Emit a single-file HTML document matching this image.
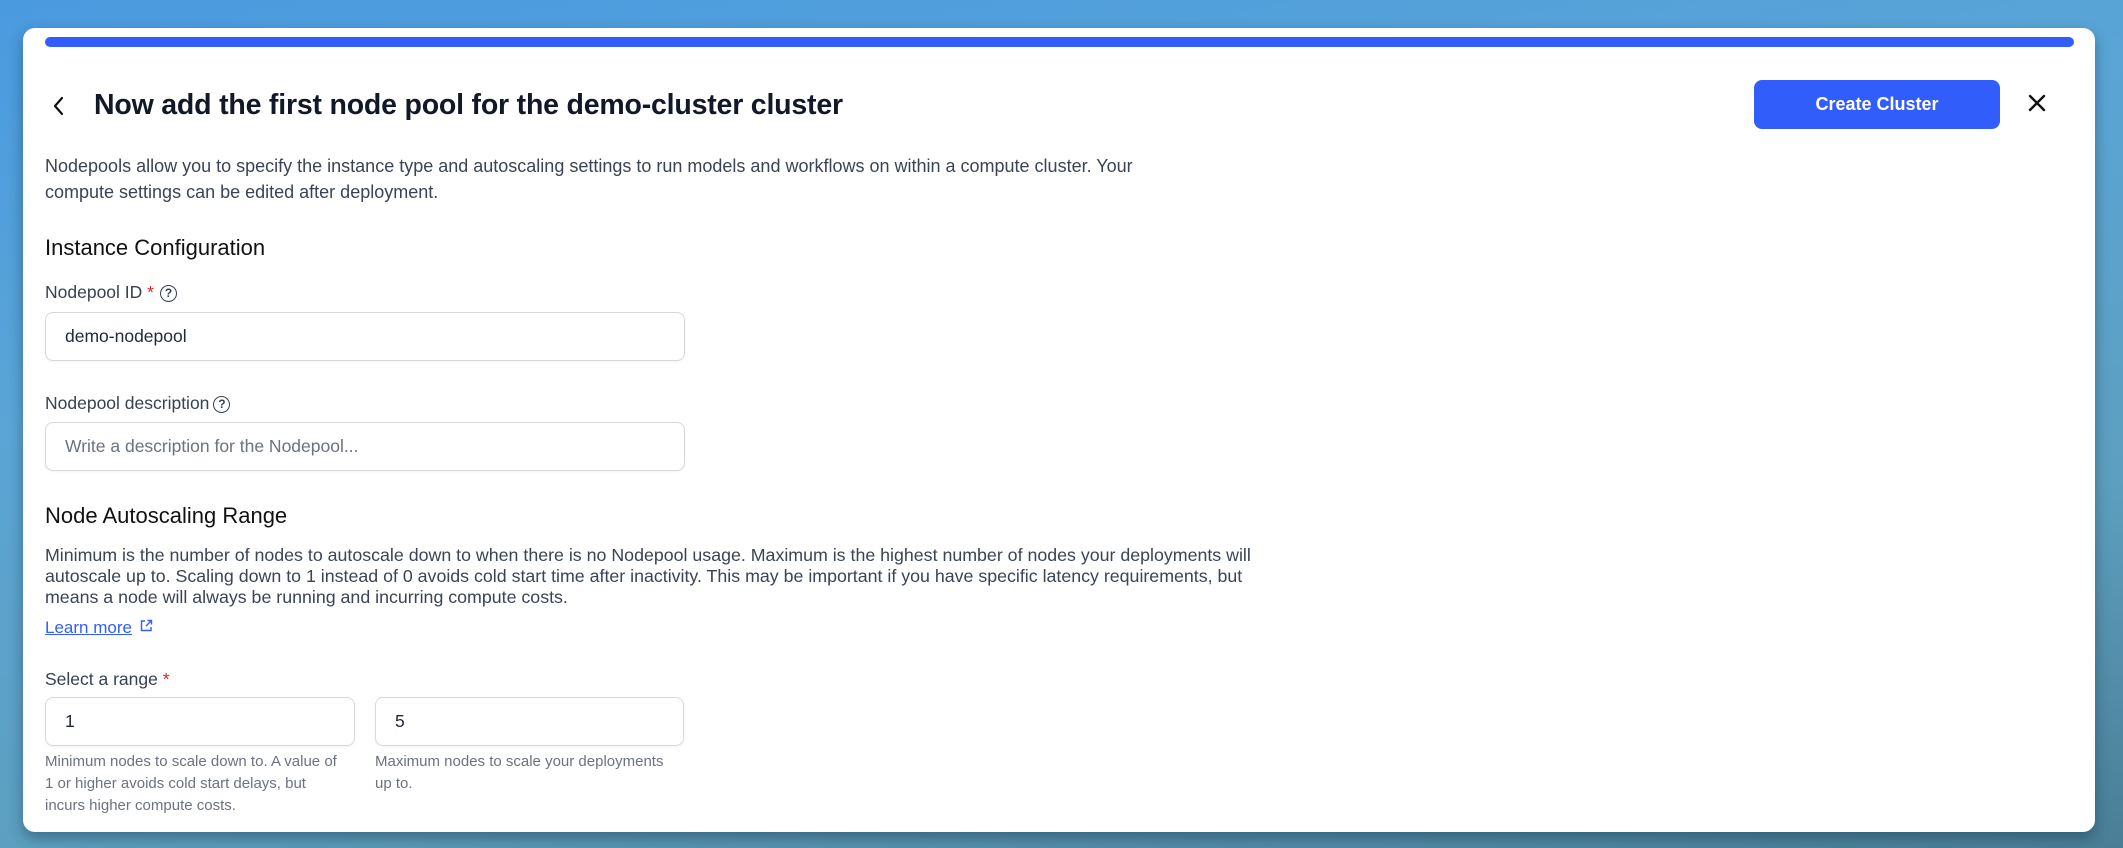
<!DOCTYPE html>
<html><head><meta charset="utf-8"><style>
*{box-sizing:border-box;margin:0;padding:0}
html,body{width:2123px;height:848px;overflow:hidden}
body{background:linear-gradient(170deg,#4a9ae0 0%,#5aa5d6 35%,#5d9fbf 70%,#4a7e96 100%);font-family:"Liberation Sans",sans-serif;position:relative}
.card{position:absolute;left:23px;top:28px;width:2072px;height:804px;background:#fff;border-radius:12px;box-shadow:0 6px 14px rgba(20,50,70,.45)}
.abs{position:absolute}
.bar{left:22px;top:9px;width:2029px;height:10px;background:#315efb;border-radius:5px}
h1{position:absolute;left:71px;top:60px;font-size:28.5px;font-weight:bold;color:#111827;line-height:34px;letter-spacing:-0.2px}
.btn{left:1731px;top:52px;width:246px;height:49px;background:#315efb;border-radius:8px;color:#fff;font-size:18px;font-weight:bold;text-align:center;line-height:49px}
.p{color:#3b4454;font-size:18px;line-height:26px;left:22px}
.h2{left:22px;font-size:22px;color:#111;line-height:26px}
.lbl{left:22px;font-size:17.5px;color:#374151;line-height:22px}
.inp{border:1.5px solid #d6d8de;border-radius:8px;height:49px;font-size:17.5px;line-height:46px;padding-left:19px;color:#1f2937;box-shadow:0 1px 2px rgba(0,0,0,.05)}
.help{font-size:15px;color:#6b7280;line-height:22px;white-space:nowrap}
.star{color:#dc2626}
.q{display:inline-block;width:17px;height:17px;border:1.5px solid #374151;border-radius:50%;font-size:12px;line-height:14px;text-align:center;vertical-align:1px;margin-left:6px;font-weight:bold}
</style></head><body>
<div class="card">
<div class="abs bar"></div>
<svg class="abs" style="left:28px;top:67px" width="16" height="22" viewBox="0 0 16 22"><path d="M11 3 L4 11 L11 19" fill="none" stroke="#111" stroke-width="2.2" stroke-linecap="round" stroke-linejoin="round"/></svg>
<h1>Now add the first node pool for the demo-cluster cluster</h1>
<div class="abs btn">Create Cluster</div>
<svg class="abs" style="left:2005px;top:66px" width="18" height="18" viewBox="0 0 18 18"><path d="M2 2L16 16M16 2L2 16" stroke="#111" stroke-width="2.4" stroke-linecap="round"/></svg>
<div class="abs p" style="top:125px;width:1200px">Nodepools allow you to specify the instance type and autoscaling settings to run models and workflows on within a compute cluster. Your<br>compute settings can be edited after deployment.</div>
<div class="abs h2" style="top:207px">Instance Configuration</div>
<div class="abs lbl" style="top:253px">Nodepool ID<span class="star"> *</span><span class="q">?</span></div>
<div class="abs inp" style="left:22px;top:284px;width:640px">demo-nodepool</div>
<div class="abs lbl" style="top:364px">Nodepool description<span class="q" style="margin-left:4px">?</span></div>
<div class="abs inp" style="left:22px;top:394px;width:640px;color:#6b7280">Write a description for the Nodepool...</div>
<div class="abs h2" style="top:475px">Node Autoscaling Range</div>
<div class="abs p" style="top:517px;width:1300px;font-size:17.8px;line-height:21px;white-space:nowrap">Minimum is the number of nodes to autoscale down to when there is no Nodepool usage. Maximum is the highest number of nodes your deployments will<br>autoscale up to. Scaling down to 1 instead of 0 avoids cold start time after inactivity. This may be important if you have specific latency requirements, but<br>means a node will always be running and incurring compute costs.</div>
<div class="abs" style="left:22px;top:590px;font-size:17px;color:#315efb;text-decoration:underline">Learn more</div>
<svg class="abs" style="left:116px;top:591px" width="14" height="14" viewBox="0 0 14 14"><path d="M6 2H2.5v9.5H12V8M8.5 1.5H12.5V5.5M12.5 1.5L7 7" fill="none" stroke="#315efb" stroke-width="1.4"/></svg>
<div class="abs lbl" style="top:640px">Select a range<span class="star"> *</span></div>
<div class="abs inp" style="left:22px;top:669px;width:310px">1</div>
<div class="abs inp" style="left:352px;top:669px;width:309px">5</div>
<div class="abs help" style="left:22px;top:723px">Minimum nodes to scale down to. A value of<br>1 or higher avoids cold start delays, but<br>incurs higher compute costs.</div>
<div class="abs help" style="left:352px;top:723px">Maximum nodes to scale your deployments<br>up to.</div>
</div>
</body></html>
